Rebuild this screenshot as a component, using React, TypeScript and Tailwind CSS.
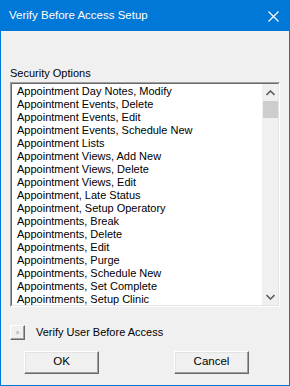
const ITEMS = [
  "Appointment Day Notes, Modify",
  "Appointment Events, Delete",
  "Appointment Events, Edit",
  "Appointment Events, Schedule New",
  "Appointment Lists",
  "Appointment Views, Add New",
  "Appointment Views, Delete",
  "Appointment Views, Edit",
  "Appointment, Late Status",
  "Appointment, Setup Operatory",
  "Appointments, Break",
  "Appointments, Delete",
  "Appointments, Edit",
  "Appointments, Purge",
  "Appointments, Schedule New",
  "Appointments, Set Complete",
  "Appointments, Setup Clinic",
];

function Chevron({ up }: { up?: boolean }) {
  return (
    <svg width="9" height="6" viewBox="0 0 9 6" className="block">
      <path
        d={up ? "M0.5 5 L4.5 1 L8.5 5" : "M0.5 1 L4.5 5 L8.5 1"}
        fill="none"
        stroke="#606060"
        strokeWidth="1.6"
      />
    </svg>
  );
}

function WinButton({ children }: { children: React.ReactNode }) {
  return (
    <button className="w-[75px] h-[23px] bg-[#f0f0f0] border border-t-white border-l-white border-r-[#696969] border-b-[#696969] shadow-[inset_-1px_-1px_#a0a0a0,inset_1px_1px_#e3e3e3] text-[11.5px] text-black flex items-center justify-center">
      {children}
    </button>
  );
}

export default function App() {
  return (
    <div
      className="w-[290px] h-[386px] border border-[#0078d7] flex flex-col bg-[#f0f0f0] text-black"
      style={{ fontFamily: '"Liberation Sans", Arial, sans-serif' }}
    >
      {/* Заголовок окна */}
      <div className="h-[30px] bg-[#0078d7] flex items-center justify-between pl-[8px] pr-[10px] shrink-0">
        <span className="text-white text-[11.5px]">Verify Before Access Setup</span>
        <svg width="11" height="11" viewBox="0 0 11 11">
          <path d="M0.5 0.5 L10.5 10.5 M10.5 0.5 L0.5 10.5" stroke="#fff" strokeWidth="1.2" />
        </svg>
      </div>

      <div className="flex-1 flex flex-col px-[9px]">
        <div className="mt-[36px] text-[11px] leading-[13px]">Security Options</div>

        {/* Список */}
        <div className="mt-[2px] h-[225px] border border-t-[#a0a0a0] border-l-[#a0a0a0] border-r-white border-b-white">
          <div className="h-full border border-t-[#696969] border-l-[#696969] border-r-[#e3e3e3] border-b-[#e3e3e3] bg-white flex">
            <div className="flex-1 pt-[1px] pl-[5px] overflow-hidden">
              {ITEMS.map(item => (
                <div key={item} className="h-[13px] leading-[13px] text-[11px] whitespace-nowrap">
                  {item}
                </div>
              ))}
            </div>
            <div className="w-[16px] bg-[#f0f0f0] flex flex-col items-center">
              <div className="h-[17px] flex items-center justify-center">
                <Chevron up />
              </div>
              <div className="w-[15px] h-[17px] bg-[#cdcdcd]" />
              <div className="flex-1" />
              <div className="h-[17px] flex items-center justify-center">
                <Chevron />
              </div>
            </div>
          </div>
        </div>

        {/* Флажок */}
        <div className="mt-[17px] flex items-center">
          <div className="w-[15px] h-[15px] bg-[#f0f0f0] border border-t-white border-l-white border-r-[#696969] border-b-[#696969] shadow-[inset_-1px_-1px_#a0a0a0] flex items-center justify-center text-[7px] leading-none text-[#a0a0a0]">
            ×
          </div>
          <span className="ml-[11px] text-[11px]">Verify User Before Access</span>
        </div>

        <div className="mt-[10px] flex pl-[14px] gap-[75px]">
          <WinButton>OK</WinButton>
          <WinButton>Cancel</WinButton>
        </div>
      </div>
    </div>
  );
}
